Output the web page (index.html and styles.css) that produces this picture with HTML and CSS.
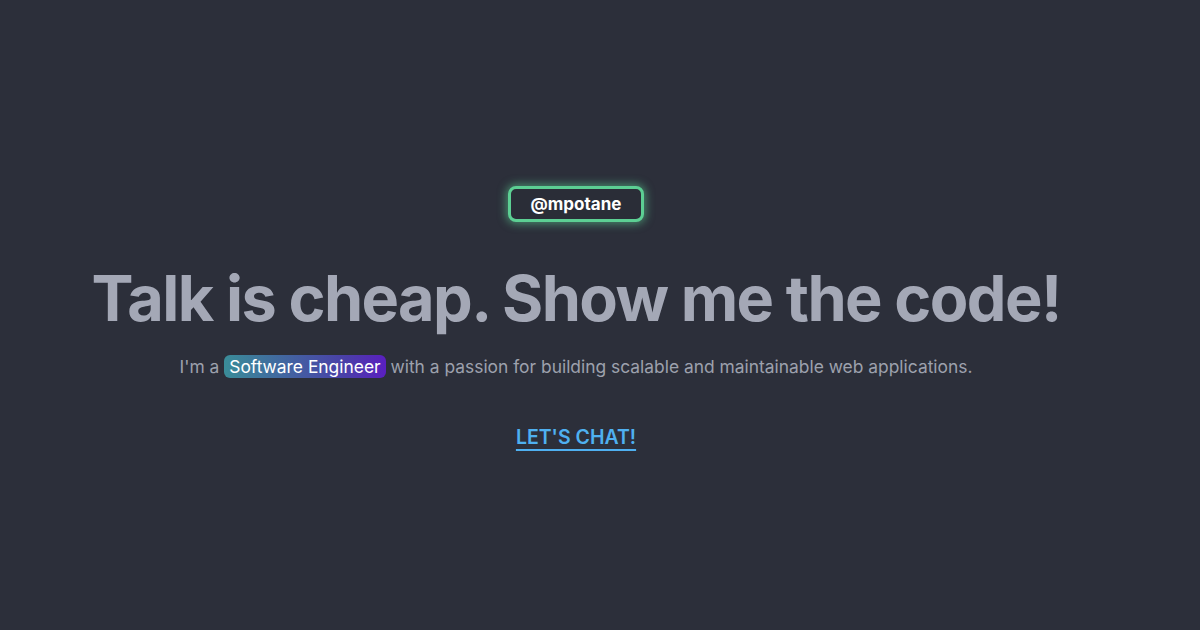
FILE: index.html
```html
<!DOCTYPE html>
<html lang="en">
<head>
  <meta charset="UTF-8">
  <meta name="viewport" content="width=device-width, initial-scale=1.0">
  <title>mpotane</title>
  <link rel="stylesheet" href="styles.css">
</head>
<body>
  <main class="hero">
    <div class="handle">@mpotane</div>
    <h1>Talk is cheap. Show me the code!</h1>
    <p class="intro">I'm a <span class="role">Software Engineer</span> with a passion for building scalable and maintainable web applications.</p>
    <a class="chat" href="#contact">LET'S CHAT!</a>
  </main>
</body>
</html>
```

FILE: styles.css
```css
html, body {
  margin: 0;
  height: 100%;
}
body {
  font-family: Inter, "Noto Sans", sans-serif;
  background-color: #2c2f3a;
  color: #a3a7b4;
}
.hero {
  min-height: 100%;
  display: flex;
  flex-direction: column;
  align-items: center;
  justify-content: center;
  text-align: center;
  padding: 5px 48px 0 0;
  box-sizing: border-box;
}
.handle {
  color: #fff;
  font-weight: 700;
  font-size: 17px;
  padding: 5px 20px;
  border: 3px solid #5ccf93;
  border-radius: 8px;
  background-color: #2a2d37;
  box-shadow: 0 0 8px 2px rgba(92, 207, 147, 0.55);
}
h1 {
  margin: 39px 0 0;
  font-size: 63px;
  font-weight: 700;
  letter-spacing: -1.6px;
  color: #a4a8b6;
  line-height: 1.2;
}
.intro {
  margin: 20px 0 0;
  font-size: 17.4px;
  color: #9da1ad;
}
.role {
  color: #fff;
  padding: 1px 5px;
  border-radius: 6px;
  background: linear-gradient(90deg, #3a8c98, #4a3fa8 75%, #5a1fc0);
}
.chat {
  margin-top: 48px;
  font-size: 19.5px;
  font-weight: 600;
  color: #4fb0f0;
  text-decoration: underline;
  text-decoration-thickness: 2px;
  text-underline-offset: 5px;
}
```
